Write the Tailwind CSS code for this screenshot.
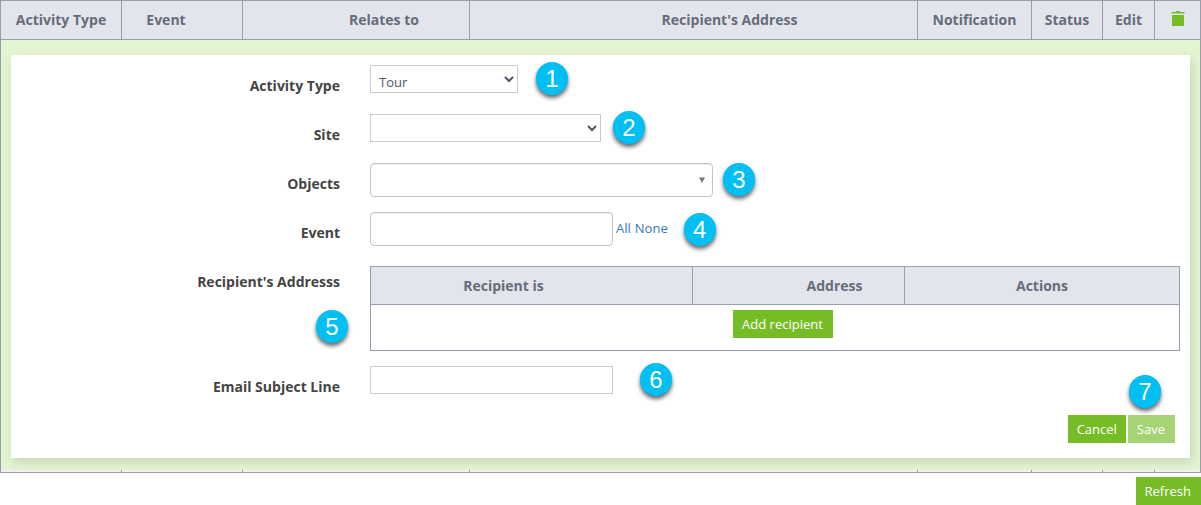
<!DOCTYPE html>
<html lang="en">
<head>
    <meta charset="UTF-8">
    <meta name="viewport" content="width=device-width, initial-scale=1.0">
    <script src="https://cdn.jsdelivr.net/npm/@tailwindcss/browser@4"></script>
    <title>Notifications</title>
</head>

<body class="bg-white font-['Open_Sans','Noto_Sans',sans-serif] text-[13px] leading-5 text-[#444]">
    <main>
        <table class="w-full table-fixed border-separate border-spacing-0 border-l border-t border-[#989eae]">
            <colgroup>
                <col class="w-[121px]">
                <col class="w-[121px]">
                <col class="w-[227px]">
                <col>
                <col class="w-[114px]">
                <col class="w-[71px]">
                <col class="w-[52px]">
                <col class="w-[46px]">
            </colgroup>
            <thead>
                <tr class="h-[39px] bg-[#e2e5ec] text-sm font-bold text-[#666c7a]">
                    <th class="border-r border-b border-[#989eae]">Activity Type</th>
                    <th class="border-r border-b border-[#989eae] pr-8">Event</th>
                    <th class="border-r border-b border-[#989eae] pl-14">Relates to</th>
                    <th class="border-r border-b border-[#989eae] pl-18">Recipient's Address</th>
                    <th class="border-r border-b border-[#989eae]">Notification</th>
                    <th class="border-r border-b border-[#989eae]">Status</th>
                    <th class="border-r border-b border-[#989eae]">Edit</th>
                    <th class="border-r border-b border-[#989eae]">
                        <button type="button" aria-label="Delete" class="block mx-auto pb-1">
                            <svg class="h-4 w-[14px]" viewBox="0 0 14 16" fill="#76bc21">
                                <path d="M0.5 2H4.5L5.5 1H8.5L9.5 2H13.5V3.6H0.5ZM1 5H13V15.5Q13 16 12.5 16H1.5Q1 16 1 15.5Z" />
                            </svg>
                        </button>
                    </th>
                </tr>
            </thead>
            <tbody>
                <tr>
                    <td colspan="8" class="border-r border-[#989eae] bg-[#e2f4d0] px-[10px] pt-[15px] pb-3">
                        <form class="flex flex-col gap-[15px] bg-white pt-[10px] pb-[15px] shadow-[2px_4px_10px_rgba(0,0,0,0.12)]">
                            <div class="grid min-h-[34px] grid-cols-[329px_1fr] gap-x-[30px] pr-[10px]">
                                <label for="activity_type" class="pt-[11px] text-right text-sm font-bold">Activity Type</label>
                                <div class="relative h-7 w-[148px]">
                                    <select id="activity_type" class="h-7 w-full border border-[#ccc] bg-white pt-[6px] pl-1 text-[#4c5566]">
                                        <option>Tour</option>
                                    </select>
                                    <span class="absolute -top-[3px] left-full ml-[18px] flex h-[33px] w-8 items-center justify-center rounded-full bg-[#00bff3] font-['Liberation_Sans',sans-serif] text-2xl text-white shadow-[0_3px_4px_rgba(0,0,0,0.6)]">1</span>
                                </div>
                            </div>
                            <div class="grid min-h-[34px] grid-cols-[329px_1fr] gap-x-[30px] pr-[10px]">
                                <label for="site" class="pt-[11px] text-right text-sm font-bold">Site</label>
                                <div class="relative h-7 w-[231px]">
                                    <select id="site" class="h-7 w-full border border-[#ccc] bg-white pl-1 text-[#4c5566]">
                                        <option></option>
                                    </select>
                                    <span class="absolute -top-[3px] left-full ml-3 flex h-[33px] w-8 items-center justify-center rounded-full bg-[#00bff3] font-['Liberation_Sans',sans-serif] text-2xl text-white shadow-[0_3px_4px_rgba(0,0,0,0.6)]">2</span>
                                </div>
                            </div>
                            <div class="grid min-h-[34px] grid-cols-[329px_1fr] gap-x-[30px] pr-[10px]">
                                <label for="objects" class="pt-[11px] text-right text-sm font-bold">Objects</label>
                                <div class="relative h-[34px] w-[343px]">
                                    <select id="objects" class="h-[34px] w-full appearance-none rounded border border-[#c4c4c4] bg-white px-2 shadow-[inset_0_1px_1px_rgba(0,0,0,0.08)]">
                                        <option></option>
                                    </select>
                                    <svg class="pointer-events-none absolute top-[14px] right-2 h-[6px] w-[6px]" viewBox="0 0 6 6" fill="#777"><path d="M0 0.5H6L3 6Z" /></svg>
                                    <span class="absolute top-0 left-full ml-[10px] flex h-[33px] w-8 items-center justify-center rounded-full bg-[#00bff3] font-['Liberation_Sans',sans-serif] text-2xl text-white shadow-[0_3px_4px_rgba(0,0,0,0.6)]">3</span>
                                </div>
                            </div>
                            <div class="grid min-h-[34px] grid-cols-[329px_1fr] gap-x-[30px] pr-[10px]">
                                <label for="event" class="pt-[11px] text-right text-sm font-bold">Event</label>
                                <div class="flex items-center">
                                    <input type="text" id="event" class="h-[34px] w-[243px] rounded border border-[#c4c4c4] px-2 shadow-[inset_0_1px_1px_rgba(0,0,0,0.08)]">
                                    <div class="relative ml-[3px] flex gap-1 pb-[2px] text-[#337ab7]">
                                        <a href="#">All</a>
                                        <a href="#">None</a>
                                        <span class="absolute -top-[5px] left-full ml-4 flex h-[33px] w-8 items-center justify-center rounded-full bg-[#00bff3] font-['Liberation_Sans',sans-serif] text-2xl text-white shadow-[0_3px_4px_rgba(0,0,0,0.6)]">4</span>
                                    </div>
                                </div>
                            </div>
                            <div class="grid grid-cols-[329px_1fr] gap-x-[30px] pr-[10px]">
                                <div class="relative pt-[11px] text-right text-sm font-bold">
                                    <span id="recipients_label">Recipient's Addresss</span>
                                    <span class="absolute top-[49px] -right-2 flex h-[33px] w-8 items-center justify-center rounded-full bg-[#00bff3] font-['Liberation_Sans',sans-serif] text-2xl font-normal text-white shadow-[0_3px_4px_rgba(0,0,0,0.6)]">5</span>
                                </div>
                                <div class="pt-[5px]">
                                    <table aria-labelledby="recipients_label" class="w-full table-fixed border-separate border-spacing-0 border-l border-t border-[#989eae]">
                                        <colgroup>
                                            <col>
                                            <col class="w-[212px]">
                                            <col class="w-[275px]">
                                        </colgroup>
                                        <thead>
                                            <tr class="h-[38px] bg-[#e2e5ec] text-sm font-bold text-[#666c7a]">
                                                <th class="border-r border-b border-[#989eae] pr-14">Recipient is</th>
                                                <th class="border-r border-b border-[#989eae] pl-18">Address</th>
                                                <th class="border-r border-b border-[#989eae]">Actions</th>
                                            </tr>
                                        </thead>
                                        <tbody>
                                            <tr class="h-[46px]">
                                                <td colspan="3" class="border-r border-b border-[#989eae] pt-[5px] pl-4 text-center align-top">
                                                    <button type="button" class="h-7 bg-[#76bc26] pr-[10px] pl-[9px] text-white">Add recipient</button>
                                                </td>
                                            </tr>
                                        </tbody>
                                    </table>
                                </div>
                            </div>
                            <div class="grid min-h-[34px] grid-cols-[329px_1fr] gap-x-[30px] pr-[10px]">
                                <label for="subject" class="pt-[11px] text-right text-sm font-bold">Email Subject Line</label>
                                <div class="relative h-7 w-[243px]">
                                    <input type="text" id="subject" class="h-7 w-full border border-[#ccc] px-2">
                                    <span class="absolute -top-[3px] left-full ml-[27px] flex h-[33px] w-8 items-center justify-center rounded-full bg-[#00bff3] font-['Liberation_Sans',sans-serif] text-2xl text-white shadow-[0_3px_4px_rgba(0,0,0,0.6)]">6</span>
                                </div>
                            </div>
                            <div class="flex justify-end gap-[2px] pr-[15px]">
                                <button type="button" class="h-7 bg-[#76bc26] px-[9px] text-white">Cancel</button>
                                <div class="relative">
                                    <button type="submit" disabled class="h-7 bg-[#a6d475] pr-[10px] pl-[9px] text-white">Save</button>
                                    <span class="absolute -top-10 left-[1px] flex h-[33px] w-8 items-center justify-center rounded-full bg-[#00bff3] font-['Liberation_Sans',sans-serif] text-2xl text-white shadow-[0_3px_4px_rgba(0,0,0,0.6)]">7</span>
                                </div>
                            </div>
                        </form>
                    </td>
                </tr>
                <tr class="h-[3px] bg-[#f0f1f4]">
                    <td class="border-r border-b border-[#989eae]"></td>
                    <td class="border-r border-b border-[#989eae]"></td>
                    <td class="border-r border-b border-[#989eae]"></td>
                    <td class="border-r border-b border-[#989eae]"></td>
                    <td class="border-r border-b border-[#989eae]"></td>
                    <td class="border-r border-b border-[#989eae]"></td>
                    <td class="border-r border-b border-[#989eae]"></td>
                    <td class="border-r border-b border-[#989eae]"></td>
                </tr>
            </tbody>
        </table>
        <div class="flex justify-end pt-1">
            <button type="button" class="h-7 bg-[#76bc26] pr-[10px] pl-[9px] text-white">Refresh</button>
        </div>
    </main>
</body>
</html>
